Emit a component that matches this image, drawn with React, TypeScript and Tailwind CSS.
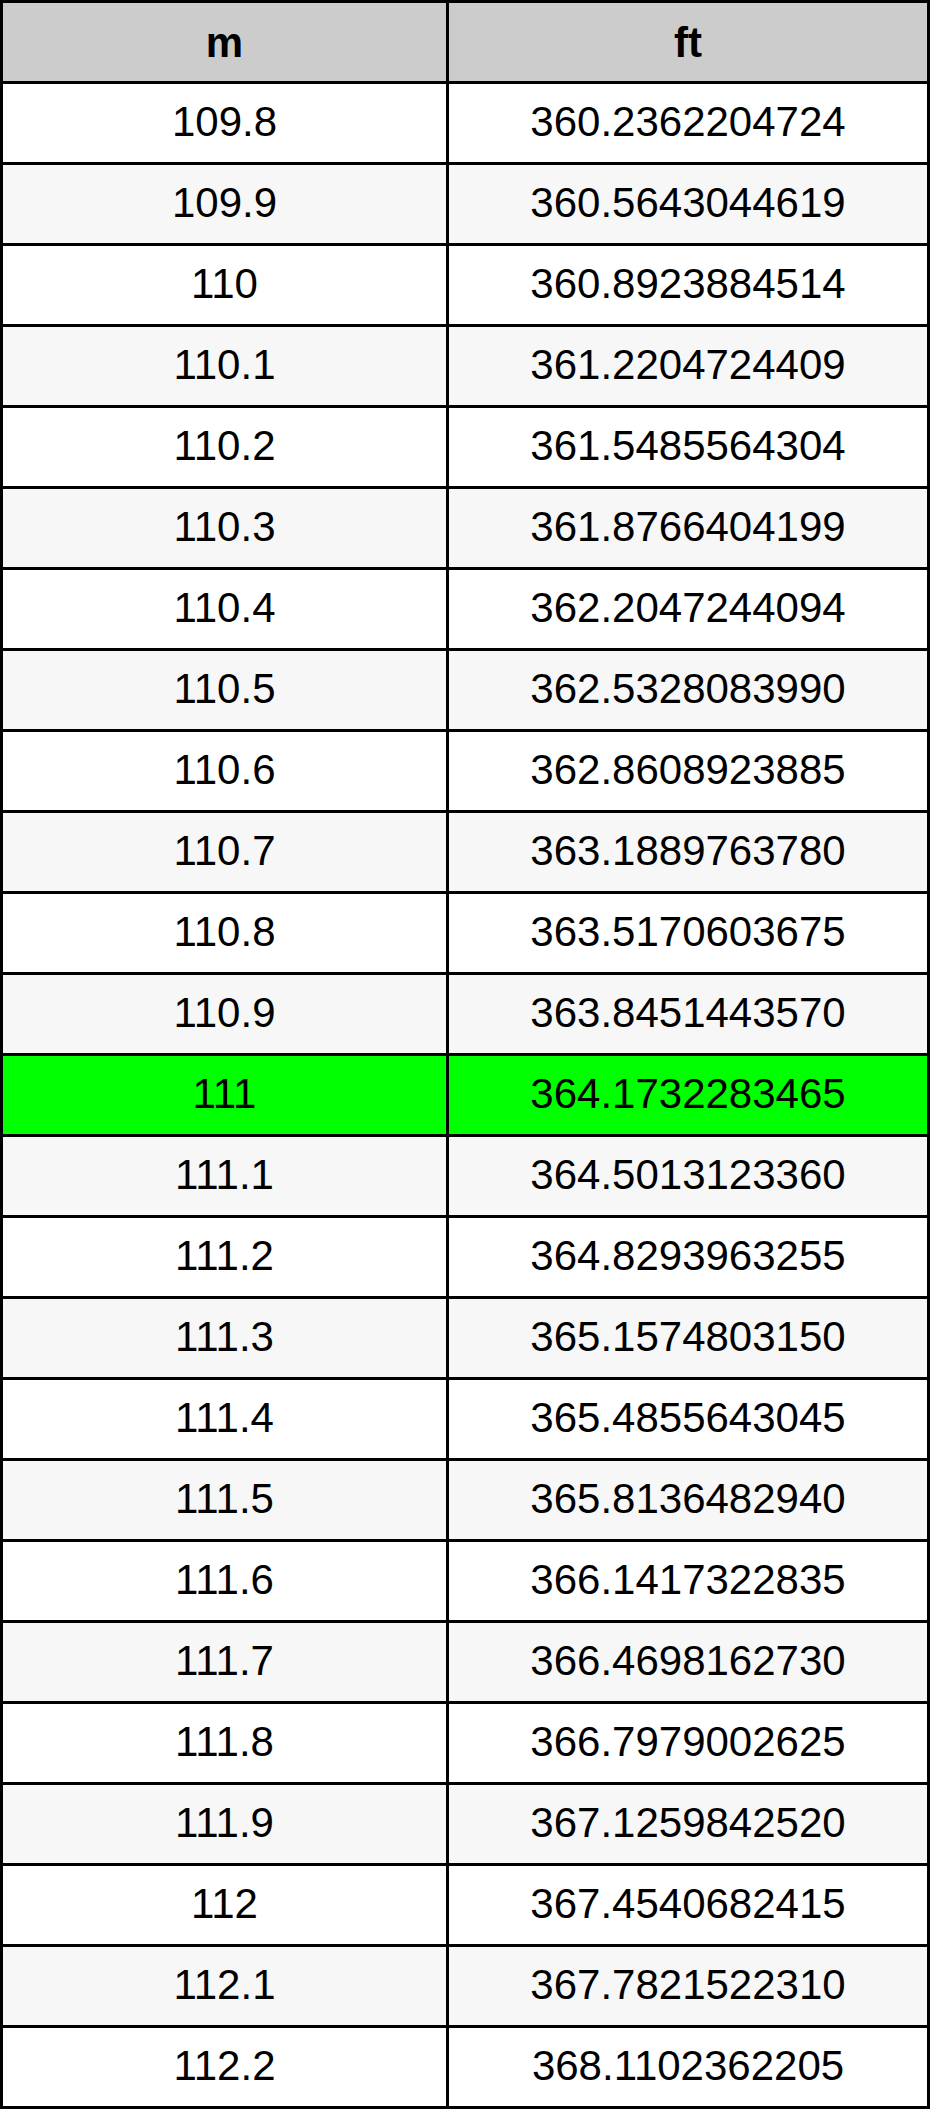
import React from 'react';

interface Row {
    m: string;
    ft: string;
}

const ROWS: Row[] = [
    { m: '109.8', ft: '360.2362204724' },
    { m: '109.9', ft: '360.5643044619' },
    { m: '110', ft: '360.8923884514' },
    { m: '110.1', ft: '361.2204724409' },
    { m: '110.2', ft: '361.5485564304' },
    { m: '110.3', ft: '361.8766404199' },
    { m: '110.4', ft: '362.2047244094' },
    { m: '110.5', ft: '362.5328083990' },
    { m: '110.6', ft: '362.8608923885' },
    { m: '110.7', ft: '363.1889763780' },
    { m: '110.8', ft: '363.5170603675' },
    { m: '110.9', ft: '363.8451443570' },
    { m: '111', ft: '364.1732283465' },
    { m: '111.1', ft: '364.5013123360' },
    { m: '111.2', ft: '364.8293963255' },
    { m: '111.3', ft: '365.1574803150' },
    { m: '111.4', ft: '365.4855643045' },
    { m: '111.5', ft: '365.8136482940' },
    { m: '111.6', ft: '366.1417322835' },
    { m: '111.7', ft: '366.4698162730' },
    { m: '111.8', ft: '366.7979002625' },
    { m: '111.9', ft: '367.1259842520' },
    { m: '112', ft: '367.4540682415' },
    { m: '112.1', ft: '367.7821522310' },
    { m: '112.2', ft: '368.1102362205' },
];

const HIGHLIGHT = '111';

function rowBg(row: Row, i: number) {
    if (row.m === HIGHLIGHT) return 'bg-[#00ff00]';
    return i % 2 === 0 ? 'bg-white' : 'bg-[#f7f7f7]';
}

export default function App() {
    return (
        <div className="w-[930px] bg-white font-['Liberation_Sans',Arial,sans-serif] text-[42px] text-black">
            <div className="border-[3px] border-black">
                {/* Header */}
                <div className="flex h-[78px] bg-[#cccccc] font-bold">
                    <div className="flex w-[446px] items-center justify-center border-r-[3px] border-black">m</div>
                    <div className="flex flex-1 items-center justify-center">ft</div>
                </div>

                {ROWS.map((row, i) => (
                    <div key={row.m} className={`flex h-[81px] border-t-[3px] border-black ${rowBg(row, i)}`}>
                        <div className="flex w-[446px] items-center justify-center border-r-[3px] border-black pb-[3px]">
                            {row.m}
                        </div>
                        <div className="flex flex-1 items-center justify-center pb-[3px]">{row.ft}</div>
                    </div>
                ))}
            </div>
        </div>
    );
}
